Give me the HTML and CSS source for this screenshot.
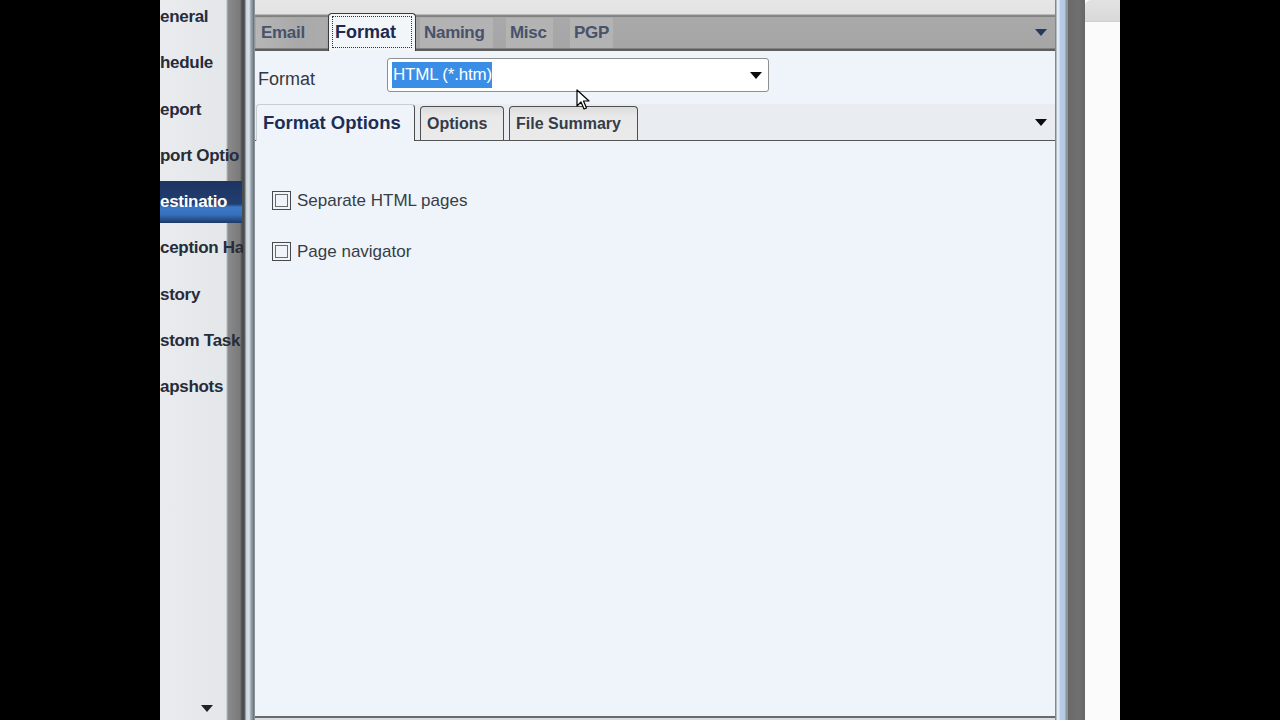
FILE: index.html
```html
<!DOCTYPE html>
<html>
<head>
<meta charset="utf-8">
<link rel="stylesheet" href="styles.css">
</head>
<body>
<div class="screen">
  <aside class="sidebar">
    <ul class="nav">
      <li class="nav-item">eneral</li>
      <li class="nav-item">hedule</li>
      <li class="nav-item">eport</li>
      <li class="nav-item">port Optio</li>
      <li class="nav-item selected">estinatio</li>
      <li class="nav-item">ception Ha</li>
      <li class="nav-item">story</li>
      <li class="nav-item">stom Task</li>
      <li class="nav-item">apshots</li>
    </ul>
    <div class="nav-scroll"><span class="tri tri-dark"></span></div>
  </aside>
  <div class="divider"></div>
  <main class="main">
    <div class="topbar">
      <div class="tabs">
        <div class="tab t-email">Email</div>
        <div class="tab active t-format"><span class="focus">Format</span></div>
        <div class="tab t-naming">Naming</div>
        <div class="tab t-misc">Misc</div>
        <div class="tab t-pgp">PGP</div>
      </div>
      <span class="tri tri-navy band-arrow"></span>
    </div>
    <div class="format-row">
      <label class="format-label">Format</label>
      <div class="combo">
        <span class="combo-sel">HTML (*.htm)</span>
        <span class="tri tri-black combo-arrow"></span>
      </div>
    </div>
    <div class="subtabs">
      <div class="subtab active">Format Options</div>
      <div class="subtab t-options">Options</div>
      <div class="subtab t-summary">File Summary</div>
      <span class="tri tri-black sub-arrow"></span>
    </div>
    <div class="content">
      <div class="check-row"><span class="checkbox"></span><span class="check-label">Separate HTML pages</span></div>
      <div class="check-row"><span class="checkbox"></span><span class="check-label">Page navigator</span></div>
    </div>
    <div class="bottom-line"></div>
    <svg class="cursor" width="14" height="22" viewBox="0 0 14 22"><path d="M1 1 L1 17 L5 13 L8 20 L10.5 19 L7.5 12 L13 12 Z" fill="#fff" stroke="#000" stroke-width="1.2" stroke-linejoin="round"/></svg>
  </main>
  <div class="rborder"></div>
  <div class="rdark"></div>
  <div class="rwhite"><div class="rwhite-top"></div></div>
</div>
</body>
</html>
```

FILE: styles.css
```css
html, body {
  margin: 0;
  padding: 0;
  background: #000;
  width: 1280px;
  height: 720px;
  overflow: hidden;
  font-family: "Liberation Sans", Arial, sans-serif;
}
.screen {
  margin-left: 160px;
  width: 960px;
  height: 720px;
  display: flex;
  background: #fff;
}
.sidebar {
  width: 83px;
  height: 720px;
  display: flex;
  flex-direction: column;
  overflow: hidden;
  background: linear-gradient(to right, #e9ebee 0, #e4e7ea 66px, #8a8a8a 68px, #7a7a7a 80px, #4e4e4e 82px, #4e4e4e 83px);
}
.nav {
  list-style: none;
  margin: -4px 0 0 0;
  padding: 0;
  display: flex;
  flex-direction: column;
  gap: 4.25px;
}
.nav-item {
  height: 42px;
  line-height: 42px;
  font-size: 17px;
  font-weight: bold;
  letter-spacing: -0.3px;
  color: #262c3a;
  white-space: nowrap;
  overflow: hidden;
}
.nav-item.selected {
  color: #fff;
  width: 82px;
  background: linear-gradient(to bottom, #1d3461 0, #223e72 55%, #3a78c6 62%, #3670bb 80%, #1d3866 100%);
}
.nav-scroll {
  margin-top: auto;
  height: 26px;
  display: flex;
  align-items: center;
  justify-content: flex-end;
  padding-right: 30px;
  padding-top: 2px;
  box-sizing: border-box;
}
.tri {
  display: inline-block;
  width: 0;
  height: 0;
  border-left: 6px solid transparent;
  border-right: 6px solid transparent;
  border-top: 7px solid #111;
}
.tri-dark { border-top-color: #222; }
.tri-navy { border-top-color: #27385e; }
.tri-black { border-top-color: #0c0c0c; }
.divider {
  width: 12px;
  height: 720px;
  background: linear-gradient(to right, #3e4448 0, #5f676d 2px, #c9d1d8 3px, #dde3e8 6px, #98a4ae 8px, #7d8890 10px, #5e6468 11px, #b8c4ce 12px);
}
.main {
  width: 800px;
  height: 720px;
  position: relative;
  display: flex;
  flex-direction: column;
  background: #eef4fa;
}
.topbar {
  height: 51px;
  flex: none;
  display: flex;
  align-items: flex-end;
  justify-content: space-between;
  background: linear-gradient(to bottom, #e6e6e6 0, #e3e3e3 14px, #8c8c8c 15px, #7e7e7e 17px, #a9a9a9 17px, #a6a6a6 48px, #5e5e5e 49px, #5e5e5e 51px);
}
.tabs {
  display: flex;
  align-items: flex-end;
  height: 51px;
  padding-left: 1px;
}
.tab {
  box-sizing: border-box;
  height: 30px;
  margin-bottom: 3px;
  font-size: 17px;
  font-weight: bold;
  letter-spacing: -0.3px;
  color: #48526a;
  display: flex;
  align-items: center;
  padding-left: 4px;
  background: #b3b3b3;
  white-space: nowrap;
}
.t-email { width: 70px; padding-left: 5px; background: linear-gradient(to right, #b6b6b6, #a9a9a9 60%, #acacac); }
.t-format { width: 88px; margin-left: 2px; }
.t-naming { width: 73px; margin-left: 4px; }
.t-misc { width: 47px; margin-left: 13px; }
.t-pgp { width: 43px; margin-left: 17px; }
.tab.active {
  height: 38px;
  margin-bottom: 0;
  background: #f3f6f9;
  border: 1.5px solid #3a3a3a;
  border-bottom: none;
  border-radius: 4px 4px 0 0;
  font-size: 18px;
  color: #1c2a52;
  padding: 2px 3px 3px 3px;
  align-items: stretch;
}
.focus {
  flex: 1;
  border: 1px dotted #333;
  display: flex;
  align-items: center;
  padding-left: 2px;
  letter-spacing: 0;
}
.band-arrow {
  margin: 0 8px 15px 0;
}
.format-row {
  height: 53px;
  flex: none;
  display: flex;
  align-items: flex-start;
  padding-top: 7px;
  box-sizing: border-box;
}
.format-label {
  width: 129px;
  padding-left: 3px;
  font-size: 18px;
  color: #34383f;
  line-height: 30px;
  padding-top: 6px;
}
.combo {
  width: 382px;
  height: 34px;
  box-sizing: border-box;
  background: #fff;
  border: 1px solid #8f8f8f;
  border-radius: 3px;
  display: flex;
  align-items: center;
  justify-content: space-between;
  padding: 0 6px 0 4px;
}
.combo-sel {
  background: #3b8ee6;
  color: #fff;
  font-size: 17px;
  letter-spacing: -0.2px;
  height: 26px;
  line-height: 26px;
  padding: 0 2px 0 1px;
  width: 100px;
  box-sizing: border-box;
  white-space: nowrap;
}
.subtabs {
  height: 37px;
  flex: none;
  box-sizing: border-box;
  display: flex;
  align-items: flex-end;
  background: #e9edf1;
  border-bottom: 1px solid #555;
  position: relative;
}
.subtab {
  box-sizing: border-box;
  height: 34px;
  font-size: 16px;
  font-weight: bold;
  color: #353c48;
  background: linear-gradient(to bottom, #dcdcdc, #e9e9e9 30%, #eaeaea);
  border: 1px solid #4e4e4e;
  border-bottom: none;
  border-radius: 4px 4px 0 0;
  display: flex;
  align-items: center;
  padding-left: 6px;
  white-space: nowrap;
}
.subtab.active {
  width: 159px;
  height: 37px;
  margin-left: 1px;
  margin-bottom: -1px;
  background: #eef4fa;
  border-color: #c8cdd2;
  border-right-color: #4a4a4a;
  font-size: 18.5px;
  color: #1e2d55;
  padding-left: 6px;
}
.t-options { width: 84px; margin-left: 5px; }
.t-summary { width: 129px; margin-left: 5px; }
.sub-arrow {
  position: absolute;
  right: 8px;
  top: 15px;
}
.content {
  flex: 1;
  padding: 50px 0 0 17px;
  display: flex;
  flex-direction: column;
  gap: 32px;
}
.check-row {
  display: flex;
  align-items: center;
  height: 19px;
  gap: 6px;
}
.checkbox {
  width: 19px;
  height: 19px;
  box-sizing: border-box;
  border: 1px solid #4a4a4a;
  box-shadow: inset 0 0 0 2px #eef4fa, inset 0 0 0 3px #6a6a6a;
  background: #eef4fa;
}
.check-label {
  font-size: 17px;
  color: #383d46;
  white-space: nowrap;
}
.bottom-line {
  height: 4px;
  flex: none;
  background: linear-gradient(to bottom, #6a6a6a 0, #6a6a6a 2px, #d8dde2 2px);
}
.cursor {
  position: absolute;
  left: 321px;
  top: 89px;
}
.rborder {
  width: 13px;
  height: 720px;
  background: linear-gradient(to right, #7f8992 0, #7f8992 1px, #e6eef6 2px, #dfe9f4 4px, #b9cde6 5px, #b4c9e4 10px, #8e9398 11px, #8e9398 13px);
}
.rdark {
  width: 17px;
  height: 720px;
  background: linear-gradient(to right, #6a6a6a, #707070 60%, #666);
}
.rwhite {
  width: 35px;
  height: 720px;
  background: #fbfbfb;
}
.rwhite-top {
  height: 21px;
  background: linear-gradient(to bottom, #e2e2e2, #d9d9d9);
  border-top-left-radius: 6px;
  border-bottom: 1px solid #cfcfcf;
}
```
